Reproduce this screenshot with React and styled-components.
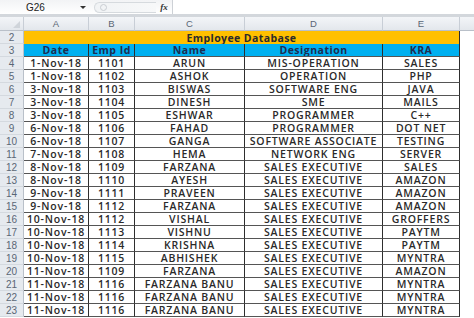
import React from 'react'
import styled, { createGlobalStyle } from 'styled-components'

const Global = createGlobalStyle`
  html, body { margin: 0; padding: 0; background: #fff; }
  body { font-family: "Open Sans", "Liberation Sans", sans-serif; }
`

const rows = [
  ['1-Nov-18', '1101', 'ARUN', 'MIS-OPERATION', 'SALES'],
  ['1-Nov-18', '1102', 'ASHOK', 'OPERATION', 'PHP'],
  ['3-Nov-18', '1103', 'BISWAS', 'SOFTWARE ENG', 'JAVA'],
  ['3-Nov-18', '1104', 'DINESH', 'SME', 'MAILS'],
  ['3-Nov-18', '1105', 'ESHWAR', 'PROGRAMMER', 'C++'],
  ['6-Nov-18', '1106', 'FAHAD', 'PROGRAMMER', 'DOT NET'],
  ['6-Nov-18', '1107', 'GANGA', 'SOFTWARE ASSOCIATE', 'TESTING'],
  ['7-Nov-18', '1108', 'HEMA', 'NETWORK ENG', 'SERVER'],
  ['8-Nov-18', '1109', 'FARZANA', 'SALES EXECUTIVE', 'SALES'],
  ['8-Nov-18', '1110', 'AYESH', 'SALES EXECUTIVE', 'AMAZON'],
  ['9-Nov-18', '1111', 'PRAVEEN', 'SALES EXECUTIVE', 'AMAZON'],
  ['9-Nov-18', '1112', 'FARZANA', 'SALES EXECUTIVE', 'AMAZON'],
  ['10-Nov-18', '1112', 'VISHAL', 'SALES EXECUTIVE', 'GROFFERS'],
  ['10-Nov-18', '1113', 'VISHNU', 'SALES EXECUTIVE', 'PAYTM'],
  ['10-Nov-18', '1114', 'KRISHNA', 'SALES EXECUTIVE', 'PAYTM'],
  ['10-Nov-18', '1115', 'ABHISHEK', 'SALES EXECUTIVE', 'MYNTRA'],
  ['11-Nov-18', '1109', 'FARZANA', 'SALES EXECUTIVE', 'AMAZON'],
  ['11-Nov-18', '1116', 'FARZANA BANU', 'SALES EXECUTIVE', 'MYNTRA'],
  ['11-Nov-18', '1116', 'FARZANA BANU', 'SALES EXECUTIVE', 'MYNTRA'],
  ['11-Nov-18', '1116', 'FARZANA BANU', 'SALES EXECUTIVE', 'MYNTRA'],
]

const headers = ['Date', 'Emp Id', 'Name', 'Designation', 'KRA']
const letters = ['A', 'B', 'C', 'D', 'E']

const Window = styled.div`
  width: 474px;
  height: 318px;
  overflow: hidden;
  background: #fff;
`

const FormulaBar = styled.div`
  display: flex;
  align-items: center;
  height: 14px;
  background: linear-gradient(#f2f3f5, #ffffff);
  border-bottom: 3px solid #d3d7dc;
`

const NameBox = styled.div`
  display: flex;
  align-items: center;
  justify-content: space-between;
  width: 60px;
  padding-left: 26px;
  font-size: 10px;
  color: #222;
  font-family: "Liberation Sans", sans-serif;
`

const Caret = styled.span`
  width: 0;
  height: 0;
  border-left: 3px solid transparent;
  border-right: 3px solid transparent;
  border-top: 3px solid #333;
`

const Splitter = styled.div`
  margin-left: 8px;
  width: 62px;
  height: 11px;
  border-radius: 6px 0 0 6px;
  border: 1px solid #d6dade;
  border-right: none;
  background: linear-gradient(90deg, #f1f3f5, #f7f8f9);
  display: flex;
  align-items: center;
  padding-left: 5px;
  box-sizing: border-box;
`

const Dot = styled.span`
  width: 5px;
  height: 5px;
  border-radius: 50%;
  border: 1px solid #c9cdd2;
`

const Fx = styled.div`
  width: 16px;
  height: 14px;
  display: flex;
  align-items: center;
  justify-content: center;
  font-family: "Liberation Serif", serif;
  font-style: italic;
  font-weight: 700;
  font-size: 9px;
  color: #333;
  border-right: 1px solid #cdd1d6;
`

const FormulaInput = styled.div`
  flex: 1;
  height: 14px;
  background: #fff;
`

const Sheet = styled.div`
  display: grid;
  grid-template-columns: 24px 65px 46px 110px 138px 77px 1fr;
  grid-auto-rows: 13px;
  grid-template-rows: 14px;
`

const ColHead = styled.div`
  background: linear-gradient(#f3f5f8, #e3e7ec);
  border-right: 1px solid #c8ced6;
  border-bottom: 1px solid #b9c0c9;
  display: flex;
  align-items: center;
  justify-content: center;
  font-size: 9.5px;
  color: #5a6675;
  font-family: "Liberation Sans", sans-serif;
  box-sizing: border-box;
`

const Corner = styled(ColHead)`
  position: relative;
  &::after {
    content: '';
    position: absolute;
    right: 3px;
    bottom: 2px;
    border-left: 7px solid transparent;
    border-bottom: 7px solid #cfd4da;
  }
`

const RowHead = styled.div`
  background: #e6eaef;
  border-right: 1px solid #b9c0c9;
  border-bottom: 1px solid #d4d9df;
  display: flex;
  align-items: center;
  justify-content: center;
  font-size: 10px;
  color: #5a6675;
  font-family: "Liberation Sans", sans-serif;
  box-sizing: border-box;
`

const Title = styled.div`
  grid-column: span 5;
  background: #ffc000;
  border-right: 1px solid #2e2e2e;
  display: flex;
  align-items: center;
  justify-content: center;
  font-size: 10.5px;
  font-weight: 700;
  letter-spacing: 0.4px;
  color: #2b2b2b;
  box-sizing: border-box;
`

const Cell = styled.div`
  display: flex;
  align-items: center;
  justify-content: center;
  white-space: nowrap;
  overflow: hidden;
  box-sizing: border-box;
  border-right: 1px solid #2e2e2e;
  border-bottom: 1px solid #555;
  font-size: 10.5px;
  color: ${({ $head }) => ($head ? '#1c2d52' : '#2a2a2a')};
  background: ${({ $head }) => ($head ? '#00b0f0' : '#fff')};
  font-weight: ${({ $head }) => ($head ? 700 : 600)};
  letter-spacing: ${({ $head }) => ($head ? '0.5px' : '0.8px')};
`

const Blank = styled.div`
  background: #fff;
`

const BlankHead = styled(ColHead)`
  border-right: none;
`

export default function App() {
  return (
    <Window>
      <Global />
      <FormulaBar>
        <NameBox>
          G26
          <Caret />
        </NameBox>
        <Splitter>
          <Dot />
        </Splitter>
        <Fx>fx</Fx>
        <FormulaInput />
      </FormulaBar>
      <Sheet>
        <Corner />
        {letters.map((l) => (
          <ColHead key={l}>{l}</ColHead>
        ))}
        <BlankHead />

        <RowHead>2</RowHead>
        <Title>Employee Database</Title>
        <Blank />

        <RowHead>3</RowHead>
        {headers.map((h) => (
          <Cell key={h} $head>
            {h}
          </Cell>
        ))}
        <Blank />

        {rows.map((r, i) => (
          <React.Fragment key={i}>
            <RowHead>{i + 4}</RowHead>
            {r.map((v, j) => (
              <Cell key={j}>{v}</Cell>
            ))}
            <Blank />
          </React.Fragment>
        ))}
      </Sheet>
    </Window>
  )
}
